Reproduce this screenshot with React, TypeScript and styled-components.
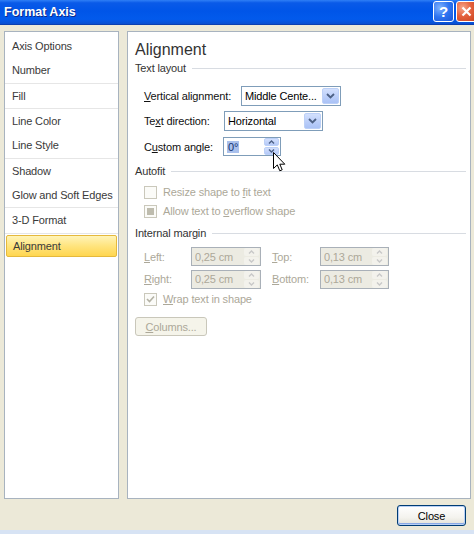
import React from 'react';
import styled, { createGlobalStyle } from 'styled-components';

const GlobalStyle = createGlobalStyle`
  html, body {
    margin: 0;
    padding: 0;
    background: #ece9d8;
  }
  body {
    font-family: "Liberation Sans", Arial, sans-serif;
    font-size: 11px;
    letter-spacing: -0.15px;
    color: #000;
  }
  u {
    text-decoration-thickness: 1px;
    text-underline-offset: 1px;
  }
`;

const Window = styled.div`
  position: relative;
  width: 474px;
  height: 534px;
  overflow: hidden;
  display: flex;
  flex-direction: column;
  background: #ece9d8;
`;

const TitleBar = styled.div`
  flex: none;
  height: 25px;
  display: flex;
  align-items: flex-start;
  padding-left: 4px;
  background: linear-gradient(
    to bottom,
    #2f7ff6 0%,
    #0a5ae8 12%,
    #0055e8 45%,
    #025aec 80%,
    #0a4fd0 100%
  );
  border-bottom: 1px solid #0b3fb0;
  box-sizing: border-box;
`;

const Title = styled.div`
  flex: 1;
  margin-top: 5px;
  color: #fff;
  font: bold 12.5px "Liberation Sans", Arial, sans-serif;
  letter-spacing: 0;
  text-shadow: 1px 1px 0 #0b2a8a;
`;

const CaptionButton = styled.div<{ $close?: boolean }>`
  width: 21px;
  height: 21px;
  margin: 1px ${(p) => (p.$close ? '-3px' : '2px')} 0 0;
  box-sizing: border-box;
  border: 1px solid #fff;
  border-radius: 3px;
  display: flex;
  align-items: center;
  justify-content: center;
  color: #fff;
  font: bold 15px "Liberation Sans", Arial, sans-serif;
  background: ${(p) =>
    p.$close
      ? 'radial-gradient(circle at 30% 30%, #f6a58a 0%, #e4623f 45%, #c9411d 100%)'
      : 'radial-gradient(circle at 30% 30%, #7fb2ff 0%, #2e74f0 50%, #1a56d8 100%)'};
`;

const Body = styled.div`
  flex: none;
  height: 474px;
  box-sizing: border-box;
  padding: 6px 3px 0 4px;
  display: flex;
  gap: 8px;
`;

const Panel = styled.div<{ $w?: number }>`
  ${(p) => (p.$w ? `width: ${p.$w}px; flex: none;` : 'flex: 1;')}
  position: relative;
  background: #fff;
  border: 1px solid #a8b3bf;
  box-sizing: border-box;
`;

const NavList = styled.div`
  padding-top: 2px;
`;

const NavGroup = styled.div`
  border-bottom: 1px solid #e6e6e6;
  padding-bottom: 0.5px;
  &:last-child {
    border-bottom: none;
  }
`;

const NavItem = styled.div<{ $active?: boolean }>`
  height: ${(p) => (p.$active ? '22px' : '24px')};
  margin: ${(p) => (p.$active ? '1px 1px' : '0')};
  padding-left: ${(p) => (p.$active ? '6px' : '7px')};
  display: flex;
  align-items: center;
  color: #3a3a3a;
  box-sizing: border-box;
  ${(p) =>
    p.$active &&
    `
    background: linear-gradient(to bottom, #fff4b8 0%, #ffe47e 50%, #ffd650 100%);
    border: 1px solid #e5b93c;
    border-radius: 2px;
  `}
`;

const Content = styled.div`
  padding: 0 4px 0 7px;
`;

const Heading = styled.div`
  margin-top: 7.5px;
  height: 20px;
  font-size: 16px;
  line-height: 20px;
  letter-spacing: 0;
  color: #333;
`;

const Section = styled.div<{ $mt: number }>`
  margin-top: ${(p) => p.$mt}px;
  height: 16px;
  display: flex;
  align-items: center;
  gap: 6px;
  color: #333;
  &::after {
    content: '';
    flex: 1;
    height: 1px;
    background: #d8dce2;
  }
`;

const Indent = styled.div<{ $mt: number }>`
  margin-top: ${(p) => p.$mt}px;
  padding-left: 9px;
`;

const Row = styled.div<{ $h: number }>`
  height: ${(p) => p.$h}px;
  display: flex;
  align-items: center;
`;

const Label = styled.div<{ $w?: number; $disabled?: boolean }>`
  ${(p) => (p.$w ? `width: ${p.$w}px; flex: none;` : '')}
  color: ${(p) => (p.$disabled ? '#aca899' : '#111')};
  white-space: nowrap;
`;

const Field = styled.div<{ $w: number; $h?: number; $disabled?: boolean }>`
  width: ${(p) => p.$w}px;
  height: ${(p) => p.$h ?? 20}px;
  flex: none;
  box-sizing: border-box;
  border: 1px solid ${(p) => (p.$disabled ? '#a9b0b8' : '#7f9db9')};
  background: ${(p) => (p.$disabled ? '#ecebe2' : '#fff')};
  color: ${(p) => (p.$disabled ? '#aca899' : '#000')};
  display: flex;
  align-items: center;
  padding: 0 1px 0 3px;
`;

const FieldText = styled.div`
  flex: 1;
  white-space: nowrap;
  overflow: hidden;
`;

const Selected = styled.span`
  background: #a9c0ec;
  color: #14306e;
  padding: 1px 1px;
`;

const DropButton = styled.div`
  width: 17px;
  height: 16px;
  flex: none;
  box-sizing: border-box;
  border: 1px solid #bcd0f7;
  border-radius: 2px;
  background: linear-gradient(to bottom, #d3e0fd 0%, #b9cdf9 60%, #aac2f6 100%);
  display: flex;
  align-items: center;
  justify-content: center;
`;

const SpinStack = styled.div`
  width: 15px;
  height: 17px;
  flex: none;
  display: flex;
  flex-direction: column;
  gap: 1px;
`;

const SpinButton = styled.div<{ $disabled?: boolean }>`
  flex: 1;
  box-sizing: border-box;
  border-radius: 2px;
  display: flex;
  align-items: center;
  justify-content: center;
  ${(p) =>
    p.$disabled
      ? 'background: #f3f2ec;'
      : 'background: linear-gradient(to bottom, #d3e0fd, #b4c9f8); border: 1px solid #bcd0f7;'}
`;

const Check = styled.div`
  width: 13px;
  height: 13px;
  flex: none;
  box-sizing: border-box;
  border: 1px solid #cac8bb;
  background: #fbfbf8;
  margin-right: 6px;
  display: flex;
  align-items: center;
  justify-content: center;
`;

const CheckFill = styled.div`
  width: 7px;
  height: 7px;
  background: #bebcae;
`;

const Gap = styled.div<{ $w: number }>`
  width: ${(p) => p.$w}px;
  flex: none;
`;

const PushButton = styled.div<{ $w: number; $h: number; $disabled?: boolean }>`
  width: ${(p) => p.$w}px;
  height: ${(p) => p.$h}px;
  box-sizing: border-box;
  border-radius: 3px;
  display: flex;
  align-items: center;
  justify-content: center;
  ${(p) =>
    p.$disabled
      ? `
    border: 1px solid #c9c7ba;
    background: #f5f4ea;
    color: #aca899;
  `
      : `
    border: 1px solid #003c74;
    background: linear-gradient(to bottom, #ffffff 0%, #f4f3ee 60%, #e3e1d6 100%);
    box-shadow: inset 0 0 0 1px #b8d0f5, inset 0 -1px 0 1px #8aa9e6;
    color: #000;
  `}
`;

const ColumnsButton = styled(PushButton)`
  margin-top: 8.75px;
`;

const Footer = styled.div`
  flex: none;
  height: 31px;
  box-sizing: border-box;
  padding: 6px 8px 0 0;
  display: flex;
  justify-content: flex-end;
  align-items: flex-start;
`;

const BottomStrip = styled.div`
  flex: none;
  height: 4px;
  background: #d7e3f4;
`;

const Cursor = styled.svg`
  position: absolute;
  left: 273px;
  top: 152px;
`;

function Chevron({ up, color = '#4d6185' }: { up?: boolean; color?: string }) {
  return (
    <svg width="9" height="6" viewBox="0 0 9 6">
      <polyline
        points={up ? '1,5 4.5,1.5 8,5' : '1,1 4.5,4.5 8,1'}
        fill="none"
        stroke={color}
        strokeWidth="1.8"
      />
    </svg>
  );
}

function SmallChevron({ up, color }: { up?: boolean; color: string }) {
  return (
    <svg width="7" height="4" viewBox="0 0 7 4">
      <polyline
        points={up ? '1,3.5 3.5,1 6,3.5' : '1,0.5 3.5,3 6,0.5'}
        fill="none"
        stroke={color}
        strokeWidth="1.4"
      />
    </svg>
  );
}

function Spinner({ width, value, disabled }: { width: number; value: React.ReactNode; disabled?: boolean }) {
  const c = disabled ? '#c8c8c8' : '#4d6185';
  return (
    <Field $w={width} $h={19} $disabled={disabled}>
      <FieldText>{value}</FieldText>
      <SpinStack>
        <SpinButton $disabled={disabled}>
          <SmallChevron up color={c} />
        </SpinButton>
        <SpinButton $disabled={disabled}>
          <SmallChevron color={c} />
        </SpinButton>
      </SpinStack>
    </Field>
  );
}

function Select({ width, value }: { width: number; value: string }) {
  return (
    <Field $w={width}>
      <FieldText>{value}</FieldText>
      <DropButton>
        <Chevron />
      </DropButton>
    </Field>
  );
}

const navGroups = [
  ['Axis Options', 'Number'],
  ['Fill'],
  ['Line Color', 'Line Style'],
  ['Shadow', 'Glow and Soft Edges'],
  ['3-D Format'],
  ['Alignment'],
];

export default function App() {
  return (
    <Window>
      <GlobalStyle />
      <TitleBar>
        <Title>Format Axis</Title>
        <CaptionButton>?</CaptionButton>
        <CaptionButton $close>
          <svg width="11" height="11" viewBox="0 0 11 11">
            <path d="M1.5 1.5 L9.5 9.5 M9.5 1.5 L1.5 9.5" stroke="#fff" strokeWidth="2.2" />
          </svg>
        </CaptionButton>
      </TitleBar>

      <Body>
        <Panel $w={115}>
          <NavList>
            {navGroups.map((group, gi) => (
              <NavGroup key={gi}>
                {group.map((item) => (
                  <NavItem key={item} $active={item === 'Alignment'}>
                    {item}
                  </NavItem>
                ))}
              </NavGroup>
            ))}
          </NavList>
        </Panel>

        <Panel>
          <Content>
            <Heading>Alignment</Heading>
            <Section $mt={0.5}>Text layout</Section>
            <Indent $mt={7}>
              <Row $h={25.5}>
                <Label $w={97}>
                  <u>V</u>ertical alignment:
                </Label>
                <Select width={100} value="Middle Cente..." />
              </Row>
              <Row $h={25.5}>
                <Label $w={80}>
                  Te<u>x</u>t direction:
                </Label>
                <Select width={99} value="Horizontal" />
              </Row>
              <Row $h={25.5}>
                <Label $w={79}>
                  C<u>u</u>stom angle:
                </Label>
                <Spinner width={58} value={<Selected>0°</Selected>} />
              </Row>
            </Indent>

            <Section $mt={3.5}>Autofit</Section>
            <Indent $mt={3.5}>
              <Row $h={19}>
                <Check />
                <Label $disabled>
                  Resize shape to <u>f</u>it text
                </Label>
              </Row>
              <Row $h={19}>
                <Check>
                  <CheckFill />
                </Check>
                <Label $disabled>
                  Allow text to <u>o</u>verflow shape
                </Label>
              </Row>
            </Indent>

            <Section $mt={4.5}>Internal margin</Section>
            <Indent $mt={4.25}>
              <Row $h={22.5}>
                <Label $w={47} $disabled>
                  <u>L</u>eft:
                </Label>
                <Spinner width={70} value="0,25 cm" disabled />
                <Gap $w={11} />
                <Label $w={48} $disabled>
                  <u>T</u>op:
                </Label>
                <Spinner width={69} value="0,13 cm" disabled />
              </Row>
              <Row $h={22.5}>
                <Label $w={47} $disabled>
                  <u>R</u>ight:
                </Label>
                <Spinner width={70} value="0,25 cm" disabled />
                <Gap $w={11} />
                <Label $w={48} $disabled>
                  <u>B</u>ottom:
                </Label>
                <Spinner width={69} value="0,13 cm" disabled />
              </Row>
              <Row $h={18}>
                <Check>
                  <svg width="9" height="8" viewBox="0 0 9 8">
                    <polyline points="1,4 3.5,6.5 8,1.5" fill="none" stroke="#b4b2a5" strokeWidth="1.6" />
                  </svg>
                </Check>
                <Label $disabled>
                  <u>W</u>rap text in shape
                </Label>
              </Row>
            </Indent>

            <ColumnsButton $w={72} $h={19} $disabled>
              <span>
                <u>C</u>olumns...
              </span>
            </ColumnsButton>
          </Content>
        </Panel>
      </Body>

      <Footer>
        <PushButton $w={69} $h={21}>
          Close
        </PushButton>
      </Footer>
      <BottomStrip />

      <Cursor width="13" height="21" viewBox="0 0 13 21">
        <path
          d="M0.5 0.5 L0.5 16.5 L4.3 12.9 L6.8 18.8 L9.2 17.8 L6.8 12.2 L11.8 12.2 Z"
          fill="#fff"
          stroke="#000"
          strokeWidth="1"
          strokeLinejoin="miter"
        />
      </Cursor>
    </Window>
  );
}
